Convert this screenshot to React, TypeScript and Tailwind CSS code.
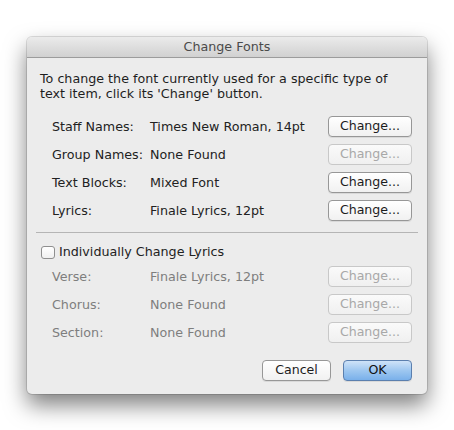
import React from "react";

const font = { fontFamily: '"Lucida Grande", "DejaVu Sans", sans-serif' };

function Btn({ disabled, children, w = "w-[84px]" }: { disabled?: boolean; children: React.ReactNode; w?: string }) {
  return (
    <div
      className={`${w} h-[21px] rounded-[4px] border flex items-center justify-center text-[12.6px] leading-none ${
        disabled
          ? "border-[#c8c8c8] bg-gradient-to-b from-[#fafafa] to-[#f0f0f0] text-[#a8a8a8]"
          : "border-[#979797] bg-gradient-to-b from-[#ffffff] to-[#f1f1f1] text-[#1c1c1c] shadow-[0_1px_0_rgba(0,0,0,0.08)]"
      }`}
    >
      {children}
    </div>
  );
}

function Row({ label, value, disabled, btnDisabled }: { label: string; value: string; disabled?: boolean; btnDisabled?: boolean }) {
  const tc = disabled ? "text-[#7e7e7e]" : "text-[#222222]";
  return (
    <div className="flex items-center h-[21px]">
      <div className={`w-[98px] pl-[25px] box-content text-[12.7px] whitespace-nowrap ${tc}`}>{label}</div>
      <div className={`flex-1 text-[12.7px] whitespace-nowrap ${tc}`}>{value}</div>
      <div className="mr-[15px]">
        <Btn disabled={btnDisabled}>Change...</Btn>
      </div>
    </div>
  );
}

export default function App() {
  return (
    <div className="w-[454px] h-[430px] bg-white pt-[37px] pl-[27px]" style={font}>
      <div className="w-[400px] h-[357px] rounded-[5px] bg-[#ececec] shadow-[0_11px_22px_rgba(0,0,0,0.5),0_0_0_1px_rgba(0,0,0,0.12)] flex flex-col overflow-hidden">
        <div className="h-[21px] bg-gradient-to-b from-[#ebebeb] to-[#d1d1d1] border-b border-[#9c9c9c] flex items-center justify-center text-[12.7px] text-[#4a4a4a] shrink-0">
          Change Fonts
        </div>
        <div className="pl-[13px] pt-[13px] text-[12.7px] leading-[15px] text-[#1e1e1e] whitespace-nowrap">
          To change the font currently used for a specific type of
          <br />
          text item, click its 'Change' button.
        </div>
        <div className="mt-[15px] flex flex-col gap-[7px]">
          <Row label="Staff Names:" value="Times New Roman, 14pt" />
          <Row label="Group Names:" value="None Found" btnDisabled />
          <Row label="Text Blocks:" value="Mixed Font" />
          <Row label="Lyrics:" value="Finale Lyrics, 12pt" />
        </div>
        <div className="mt-[11px] ml-[9px] mr-[9px] h-px bg-[#b5b5b5]" />
        <div className="mt-[12px] ml-[14px] flex items-center gap-[4px] h-[14px]">
          <div className="w-[14px] h-[13px] rounded-[3px] border border-[#8f8f8f] bg-gradient-to-b from-[#ffffff] to-[#f0f0f0]" />
          <span className="text-[12.7px] text-[#222222]">Individually Change Lyrics</span>
        </div>
        <div className="mt-[7px] flex flex-col gap-[7px]">
          <Row label="Verse:" value="Finale Lyrics, 12pt" disabled btnDisabled />
          <Row label="Chorus:" value="None Found" disabled btnDisabled />
          <Row label="Section:" value="None Found" disabled btnDisabled />
        </div>
        <div className="mt-[17px] flex justify-end gap-[12px] mr-[15px]">
          <Btn w="w-[69px]">Cancel</Btn>
          <div className="w-[69px] h-[21px] rounded-[4px] border border-[#5b7fae] bg-gradient-to-b from-[#cfe3f8] via-[#9ec7f0] to-[#79b0ea] flex items-center justify-center text-[12.6px] leading-none text-[#111111] shadow-[0_1px_0_rgba(0,0,0,0.08)]">
            OK
          </div>
        </div>
      </div>
    </div>
  );
}
